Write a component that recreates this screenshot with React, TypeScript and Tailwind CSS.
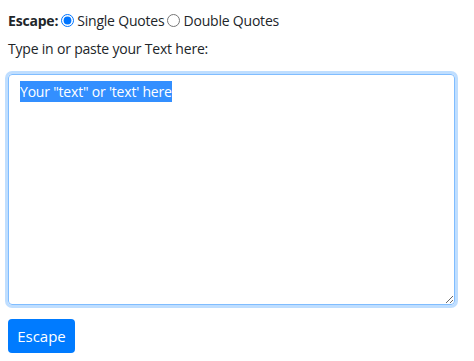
import { useEffect, useRef, useState } from 'react';

export default function App() {
  const [mode, setMode] = useState<'single' | 'double'>('single');
  const [text, setText] = useState(`Your "text" or 'text' here`);
  const areaRef = useRef<HTMLTextAreaElement>(null);

  // Focus the box and select its sample text, as the page does on load
  useEffect(() => {
    areaRef.current?.focus();
    areaRef.current?.select();
  }, []);

  return (
    <div className="px-2 pt-[10px] font-['Open_Sans',sans-serif] text-[14px] tracking-[-0.2px] text-[#212529]">
      <div className="flex items-center h-[21px]">
        <span className="font-bold mr-[3px]">Escape:</span>
        <label className="flex items-center">
          <input
            type="radio"
            name="escape"
            checked={mode === 'single'}
            onChange={() => setMode('single')}
            className="m-0 mr-[3px] w-[13px] h-[13px] accent-[#0075ff]"
          />
          Single Quotes
        </label>
        <label className="flex items-center ml-[3px]">
          <input
            type="radio"
            name="escape"
            checked={mode === 'double'}
            onChange={() => setMode('double')}
            className="m-0 mr-[3px] w-[13px] h-[13px] accent-[#0075ff]"
          />
          Double Quotes
        </label>
      </div>

      <p className="mt-[7px] leading-[21px]">Type in or paste your Text here:</p>

      <textarea
        ref={areaRef}
        value={text}
        onChange={(e) => setText(e.target.value)}
        className="block mt-[15px] w-[447px] h-[231px] px-[11px] py-[6px] border border-[#80bdff] rounded-[4px] outline-none shadow-[0_0_0_3px_rgba(0,123,255,0.25)] text-[14px] leading-[21px] tracking-[-0.2px] text-[#495057] selection:bg-[#338fff] selection:text-white"
      />

      <button className="mt-[14px] w-[67px] h-[34px] rounded-[4px] bg-[#007bff] text-white text-[15px] tracking-normal">
        Escape
      </button>
    </div>
  );
}
